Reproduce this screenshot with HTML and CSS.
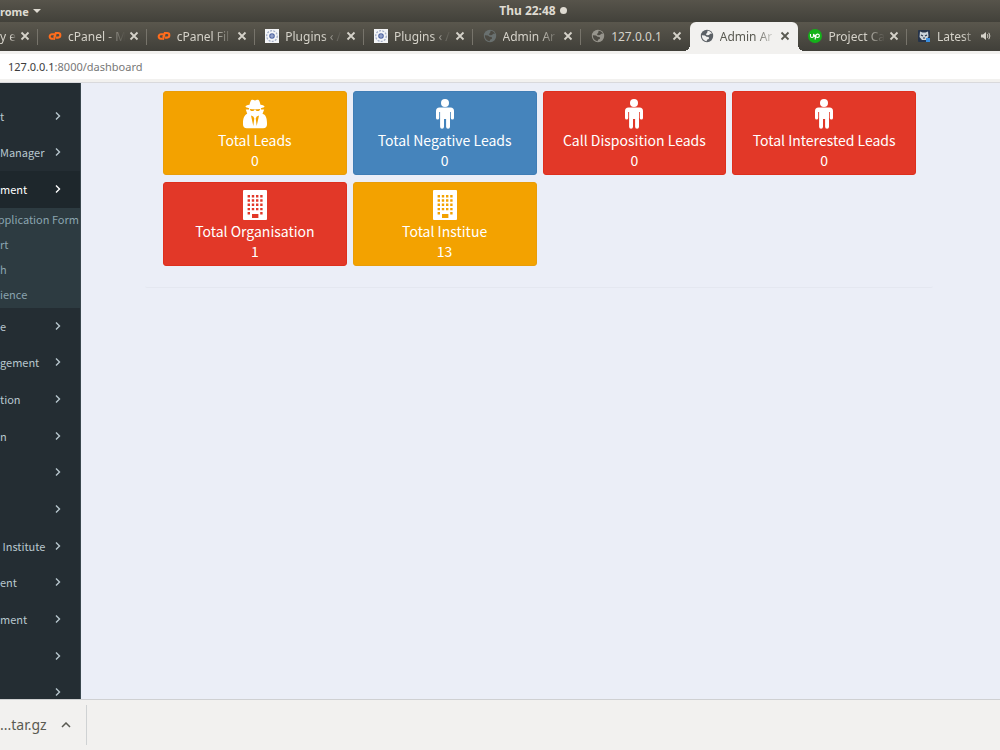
FILE: index.html
```
<!DOCTYPE html>
<html lang="en">
<head>
    <meta charset="UTF-8">
    <meta name="viewport" content="width=device-width, initial-scale=1.0">
    <title>Admin Area</title>
    <link rel="stylesheet" href="styles.css">
</head>
<body>
    <!-- shared icons -->
    <svg class="sprite" aria-hidden="true">
        <symbol id="close" viewBox="0 0 10 10"><path d="M1.5 1.5l7 7M8.5 1.5l-7 7" fill="none" stroke="currentColor" stroke-width="1.8"/></symbol>
        <symbol id="angle" viewBox="0 0 6 10"><path d="M1 1.5L4.5 5 1 8.5" fill="none" stroke="currentColor" stroke-width="1.4"/></symbol>
        <symbol id="cpanel" viewBox="0 0 16 14">
            <path d="M7.5 5H4.8a2.6 2.6 0 0 0-.5 5.2h1.5M6.8 11.2L8.9 3.6h2.6a2.6 2.6 0 0 1 0 5.2H9.2M6.2 8H8" fill="none" stroke="#ff6c1c" stroke-width="2.4"/>
        </symbol>
        <symbol id="wp" viewBox="0 0 14 14">
            <rect width="14" height="14" fill="#f4f5f7"/>
            <circle cx="7" cy="7" r="5.3" fill="none" stroke="#a3aec8" stroke-width="1.3" stroke-dasharray="2 1.2"/>
            <circle cx="7" cy="7" r="2.8" fill="#5268a5"/>
            <path d="M5 7h4M7 5v4" stroke="#c5cee5" stroke-width=".7"/>
        </symbol>
        <symbol id="globe" viewBox="0 0 14 14">
            <circle cx="7" cy="7" r="6.2" fill="currentColor"/>
            <path class="land" d="M7.600 1.800c2 .1 3.600 1.300 4.300 3L10 4.800 9.200 6 7 6.300 5.800 5.200 7.200 3.800zM1.900 6.300l3 .3 1.600 1.200 2.200.2.300 1.700L7 10.800l-.3 1.400C3.800 12 1.800 9.600 1.900 6.300z"/>
        </symbol>
        <symbol id="person" viewBox="0 0 18 30">
            <circle cx="9" cy="4" r="4"/>
            <path d="M3.5 8.500h11A3.500 3.500 0 0 1 18 12v7a1.600 1.600 0 0 1-3.200 0v-6H14v14.700a1.900 1.900 0 0 1-3.900 0V20H8v7.700a1.900 1.900 0 0 1-3.900 0V13h-.9v6A1.600 1.600 0 0 1 0 19v-7a3.500 3.500 0 0 1 3.500-3.500z"/>
        </symbol>
        <symbol id="spy" viewBox="0 0 24 29">
            <path fill-rule="evenodd" d="M8.4.6C9.8-.2 10.7.9 12 .9S14.200-.2 15.600.6C16.500 1.200 17 3.500 17.500 5.300 19.800 5.700 21.500 6.300 21.500 7c0 .7-1.500 1.300-3.600 1.700.1.500.1 1 .1 1.300h3.200l-1.700 4.300C22.500 15 24 18.200 24 23.600V25c0 2.300-1.400 3.800-3.800 3.800H3.800C1.400 28.800 0 27.300 0 25v-1.400c0-5.200 1.500-8.200 4.200-9.400L2.800 10H6c0-.4 0-.8.1-1.300C4 8.300 2.500 7.700 2.500 7c0-.7 1.700-1.300 4-1.700C7 3.500 7.500 1.200 8.400.6zM6.800 9.400c.3 1.500 1 2 2.400 2 1.600 0 2.300-.6 2.500-1.500h.6c.2.900.9 1.500 2.500 1.500 1.400 0 2.100-.5 2.400-2-3.300.5-7.100.5-10.400 0zM8 16l2.300 10.600L11.300 19l-1-2zM16 16l-2.300 10.600-1-7.600 1-2z"/>
        </symbol>
        <symbol id="building" viewBox="0 0 24 30">
            <rect width="24" height="30" rx="1"/>
            <path class="windows" d="M5.800 5v16M10 5v16M14.200 5v16M18.400 5v16" fill="none" stroke-width="2.400" stroke-dasharray="2.400 1.900"/>
            <path class="windows" d="M4.600 23.300h2.400M17.200 23.300h2.400" stroke-width="2.400"/>
            <path class="windows" d="M9 26h6.400" stroke-width="4"/>
        </symbol>
    </svg>

    <header class="topbar">
        <button class="app-menu">rome <span class="caret"></span></button>
        <button class="clock">Thu 22:48 <span class="dot"></span></button>
    </header>

    <div class="tabs">
        <div class="tab first">
            <span class="tab-title">y e</span>
            <button class="close" aria-label="Close tab"><svg><use href="#close"/></svg></button>
        </div>
        <div class="tab">
            <svg class="favicon"><use href="#cpanel"/></svg>
            <span class="tab-title">cPanel - M</span>
            <button class="close" aria-label="Close tab"><svg><use href="#close"/></svg></button>
        </div>
        <div class="tab">
            <svg class="favicon"><use href="#cpanel"/></svg>
            <span class="tab-title">cPanel Fil</span>
            <button class="close" aria-label="Close tab"><svg><use href="#close"/></svg></button>
        </div>
        <div class="tab">
            <svg class="favicon"><use href="#wp"/></svg>
            <span class="tab-title">Plugins ‹ /</span>
            <button class="close" aria-label="Close tab"><svg><use href="#close"/></svg></button>
        </div>
        <div class="tab">
            <svg class="favicon"><use href="#wp"/></svg>
            <span class="tab-title">Plugins ‹ /</span>
            <button class="close" aria-label="Close tab"><svg><use href="#close"/></svg></button>
        </div>
        <div class="tab">
            <svg class="favicon dim"><use href="#globe"/></svg>
            <span class="tab-title">Admin Ar</span>
            <button class="close" aria-label="Close tab"><svg><use href="#close"/></svg></button>
        </div>
        <div class="tab before-active">
            <svg class="favicon"><use href="#globe"/></svg>
            <span class="tab-title short">127.0.0.1</span>
            <button class="close" aria-label="Close tab"><svg><use href="#close"/></svg></button>
        </div>
        <div class="tab active">
            <svg class="favicon"><use href="#globe"/></svg>
            <span class="tab-title">Admin Ar</span>
            <button class="close" aria-label="Close tab"><svg><use href="#close"/></svg></button>
        </div>
        <div class="tab">
            <svg class="favicon" viewBox="0 0 14 14">
                <circle cx="7" cy="7" r="7" fill="#14b21a"/>
                <path d="M2.500 5v2a1.500 1.500 0 0 0 3 0V5c.5 2 1.300 3 2.500 3M7 10.500l1-4a1.700 1.700 0 1 1 1.700 2C8.300 8.500 7.300 7 7 5.500" fill="none" stroke="#fff" stroke-width="1.100"/>
            </svg>
            <span class="tab-title">Project Ca</span>
            <button class="close" aria-label="Close tab"><svg><use href="#close"/></svg></button>
        </div>
        <div class="tab last">
            <svg class="favicon" viewBox="0 0 14 14">
                <rect x="1" y="1" width="12" height="12" rx="1" fill="#25334a"/>
                <path d="M3 2.500l2.500 1h3l2.500-1 .5 5L9 11H5L2.500 8z" fill="#c9d2da"/>
                <path d="M4 6l2 1M10 6L8 7M6 9h2" stroke="#25334a" stroke-width="1.200"/>
                <rect x="9" y="9" width="4" height="4" fill="#3a8fe0"/>
            </svg>
            <span class="tab-title">Latest</span>
            <svg class="audio" viewBox="0 0 10 10">
                <path d="M0 3.500h2L5 1v8L2 6.500H0z" fill="currentColor"/>
                <path d="M6.300 3.200q1.300 1.800 0 3.600M7.800 1.800q2.200 3.200 0 6.400" fill="none" stroke="currentColor"/>
            </svg>
            <button class="close" aria-label="Close tab"><svg><use href="#close"/></svg></button>
        </div>
    </div>

    <div class="toolbar">
        <div class="address" role="textbox" aria-label="Address" contenteditable="true" spellcheck="false">127.0.0.1<span>:8000/dashboard</span></div>
    </div>

    <div class="page">
        <nav class="sidebar">
            <ul class="menu">
                <li><a href="#">t <svg><use href="#angle"/></svg></a></li>
                <li><a href="#">Manager <svg><use href="#angle"/></svg></a></li>
                <li class="open"><a href="#">ment <svg><use href="#angle"/></svg></a></li>
                <li class="sub">
                    <ul>
                        <li><a href="#" class="long">application Form</a></li>
                        <li><a href="#">rt</a></li>
                        <li><a href="#">h</a></li>
                        <li><a href="#">ience</a></li>
                    </ul>
                </li>
                <li><a href="#">e <svg><use href="#angle"/></svg></a></li>
                <li><a href="#">gement <svg><use href="#angle"/></svg></a></li>
                <li><a href="#">tion <svg><use href="#angle"/></svg></a></li>
                <li><a href="#">n <svg><use href="#angle"/></svg></a></li>
                <li><a href="#" aria-label="Expand"><svg><use href="#angle"/></svg></a></li>
                <li><a href="#" aria-label="Expand"><svg><use href="#angle"/></svg></a></li>
                <li><a href="#">&nbsp;Institute <svg><use href="#angle"/></svg></a></li>
                <li><a href="#">ent <svg><use href="#angle"/></svg></a></li>
                <li><a href="#">ment <svg><use href="#angle"/></svg></a></li>
                <li><a href="#" aria-label="Expand"><svg><use href="#angle"/></svg></a></li>
                <li><a href="#" aria-label="Expand"><svg><use href="#angle"/></svg></a></li>
            </ul>
        </nav>

        <main class="content">
            <section class="panel">
                <a href="#" class="card orange"><svg><use href="#spy"/></svg><span>Total Leads</span><span>0</span></a>
                <a href="#" class="card blue"><svg><use href="#person"/></svg><span>Total Negative Leads</span><span>0</span></a>
                <a href="#" class="card red"><svg><use href="#person"/></svg><span>Call Disposition Leads</span><span>0</span></a>
                <a href="#" class="card red"><svg><use href="#person"/></svg><span>Total Interested Leads</span><span>0</span></a>
                <a href="#" class="card red"><svg><use href="#building"/></svg><span>Total Organisation</span><span>1</span></a>
                <a href="#" class="card orange"><svg><use href="#building"/></svg><span>Total Institue</span><span>13</span></a>
            </section>
        </main>
    </div>

    <footer class="downloads">
        <button class="file">...tar.gz
            <svg viewBox="0 0 10 6"><path d="M1 5l4-4 4 4" fill="none" stroke="currentColor" stroke-width="1.500"/></svg>
        </button>
    </footer>
</body>
</html>
```

FILE: styles.css
```
* {
    box-sizing: border-box;
}
body {
    margin: 0;
    height: 100vh;
    display: flex;
    flex-direction: column;
    overflow: hidden;
    font-family: "Noto Sans", sans-serif;
    font-size: 12px;
    background: #ebeef7;
}
button {
    padding: 0;
    border: none;
    background: none;
    color: inherit;
    font: inherit;
}
a {
    color: inherit;
    text-decoration: none;
}
ul {
    margin: 0;
    padding: 0;
    list-style: none;
}
.sprite {
    display: none;
}

/* desktop bar */
.topbar {
    display: grid;
    grid-template-columns: 1fr auto 1fr;
    flex: none;
    height: 22px;
    background: linear-gradient(#57544b, #42413a);
    color: #dfdbd2;
    font-weight: bold;
}
.app-menu,
.clock {
    display: flex;
    align-items: center;
    gap: 4px;
}
.app-menu {
    font-size: 11px;
}
.clock {
    grid-column: 2;
    padding: 0 0 2px 66px;
}
.caret {
    border: 4px solid transparent;
    border-top-color: #dfdbd2;
    border-bottom: 0;
}
.dot {
    width: 7px;
    height: 7px;
    border-radius: 50%;
    background: #dfdbd2;
}

/* browser tabs */
.tabs {
    display: flex;
    flex: none;
    height: 29px;
    overflow: hidden;
    background: linear-gradient(#5a574d, #403f39);
    color: #d5d2c9;
}
.tab {
    position: relative;
    display: flex;
    align-items: center;
    flex: 1 0 108px;
    min-width: 0;
    padding: 0 8px 1px 10px;
    --land: #4c4a43;
}
.tab:not(.active):not(.before-active):not(.last)::after {
    content: "";
    position: absolute;
    right: 0;
    top: 7px;
    width: 1px;
    height: 16px;
    background: #77746b;
}
.tab.first {
    flex: 0 0 38px;
    padding-left: 0;
}
.tab.last {
    flex: 0 0 93px;
    padding-right: 0;
}
.tab.active {
    border-radius: 6px 6px 0 0;
    background: #f2f1ef;
    color: #5a5a52;
    --land: #f2f1ef;
}
/* curved feet of the active tab */
.tab.active::before,
.tab.active::after {
    content: "";
    position: absolute;
    bottom: 0;
    width: 6px;
    height: 6px;
}
.tab.active::before {
    right: 100%;
    background: radial-gradient(circle at 0 0, transparent 6px, #f2f1ef 6px);
}
.tab.active::after {
    left: 100%;
    background: radial-gradient(circle at 100% 0, transparent 6px, #f2f1ef 6px);
}
.tab .favicon {
    flex: none;
    width: 14px;
    height: 14px;
    margin-right: 6px;
    color: #96948c;
}
.tab .dim {
    color: #69706f;
}
.tab.active .favicon {
    color: #5c6166;
}
.land {
    fill: var(--land);
}
.tab-title {
    flex: 1;
    min-width: 0;
    overflow: hidden;
    white-space: nowrap;
    mask-image: linear-gradient(to right, #000 65%, transparent);
}
.tab-title.short {
    mask-image: none;
}
.tab.last .tab-title {
    flex: 0 0 40px;
}
.close {
    flex: none;
    width: 10px;
    height: 10px;
    margin-left: 4px;
}
.close svg {
    display: block;
    width: 10px;
    height: 10px;
}
.audio {
    flex: none;
    width: 10px;
    height: 10px;
    margin: 0 4px;
}

/* address bar */
.toolbar {
    flex: none;
    height: 32px;
    padding: 3px 0 4px;
    border-bottom: 1px solid #d9d9dc;
    background: #f2f1ef;
}
.address {
    height: 25px;
    padding-left: 8px;
    background: #fff;
    color: #3c3c3c;
    font-size: 11px;
    line-height: 25px;
    outline: none;
}
.address span {
    color: #777;
}

/* admin page */
.page {
    display: flex;
    flex: 1;
    min-height: 0;
    font-family: "Noto Sans CJK SC", sans-serif;
}
.sidebar {
    flex: none;
    width: 81px;
    padding-top: 15px;
    overflow: hidden;
    border-right: 1px solid #3a474e;
    background: #242d33;
    color: #b8c7ce;
    font-size: 11px;
}
.menu {
    display: flex;
    flex-direction: column;
    height: calc(100% + 12px);
}
.menu > li {
    flex: 1 0 36px;
}
.menu > li > a {
    display: flex;
    align-items: center;
    justify-content: space-between;
    height: 100%;
    padding: 0 19px 1px 0;
}
.menu svg {
    width: 6px;
    height: 10px;
    margin-left: auto;
}
.menu .open {
    background: #1e272c;
    color: #fff;
}
.menu .sub {
    flex: none;
    background: #2d3b41;
    color: #8aa4af;
}
.sub a {
    display: flex;
    padding-bottom: 2px;
    line-height: 23px;
    white-space: nowrap;
}
.sub .long {
    justify-content: flex-end;
    padding-right: 1px;
}
.content {
    flex: 1;
    padding: 0 67px 0 64px;
}
.panel {
    display: grid;
    grid-template-columns: repeat(4, 1fr);
    gap: 7px 6px;
    padding: 8px 17px 21px 18px;
    border-bottom: 1px solid #e4e7f0;
    border-radius: 2px;
}
.card {
    display: flex;
    flex-direction: column;
    align-items: center;
    padding: 7px 4px 4px;
    border: 1px solid;
    border-radius: 3px;
    color: #fff;
    font-size: 14px;
    line-height: 20px;
}
.card svg {
    width: 24px;
    height: 30px;
    margin-bottom: 1px;
    fill: #fff;
}
.orange {
    background: #f3a200;
    border-color: #e99d08;
    --window: #f3a200;
}
.blue {
    background: #4584bc;
    border-color: #3f7db5;
}
.red {
    background: #e23828;
    border-color: #de2f1d;
    --window: #e23828;
}
.windows {
    stroke: var(--window);
}

/* downloads */
.downloads {
    flex: none;
    height: 51px;
    padding: 5px 0;
    border-top: 1px solid #cfd0d2;
    background: #f2f1ef;
    color: #5a5a52;
}
.file {
    display: flex;
    align-items: center;
    justify-content: space-between;
    width: 87px;
    height: 40px;
    padding: 0 15px 1px 0;
    border-right: 1px solid #cfd2d3;
    font-size: 14px;
}
.file svg {
    width: 10px;
    height: 6px;
}
```
